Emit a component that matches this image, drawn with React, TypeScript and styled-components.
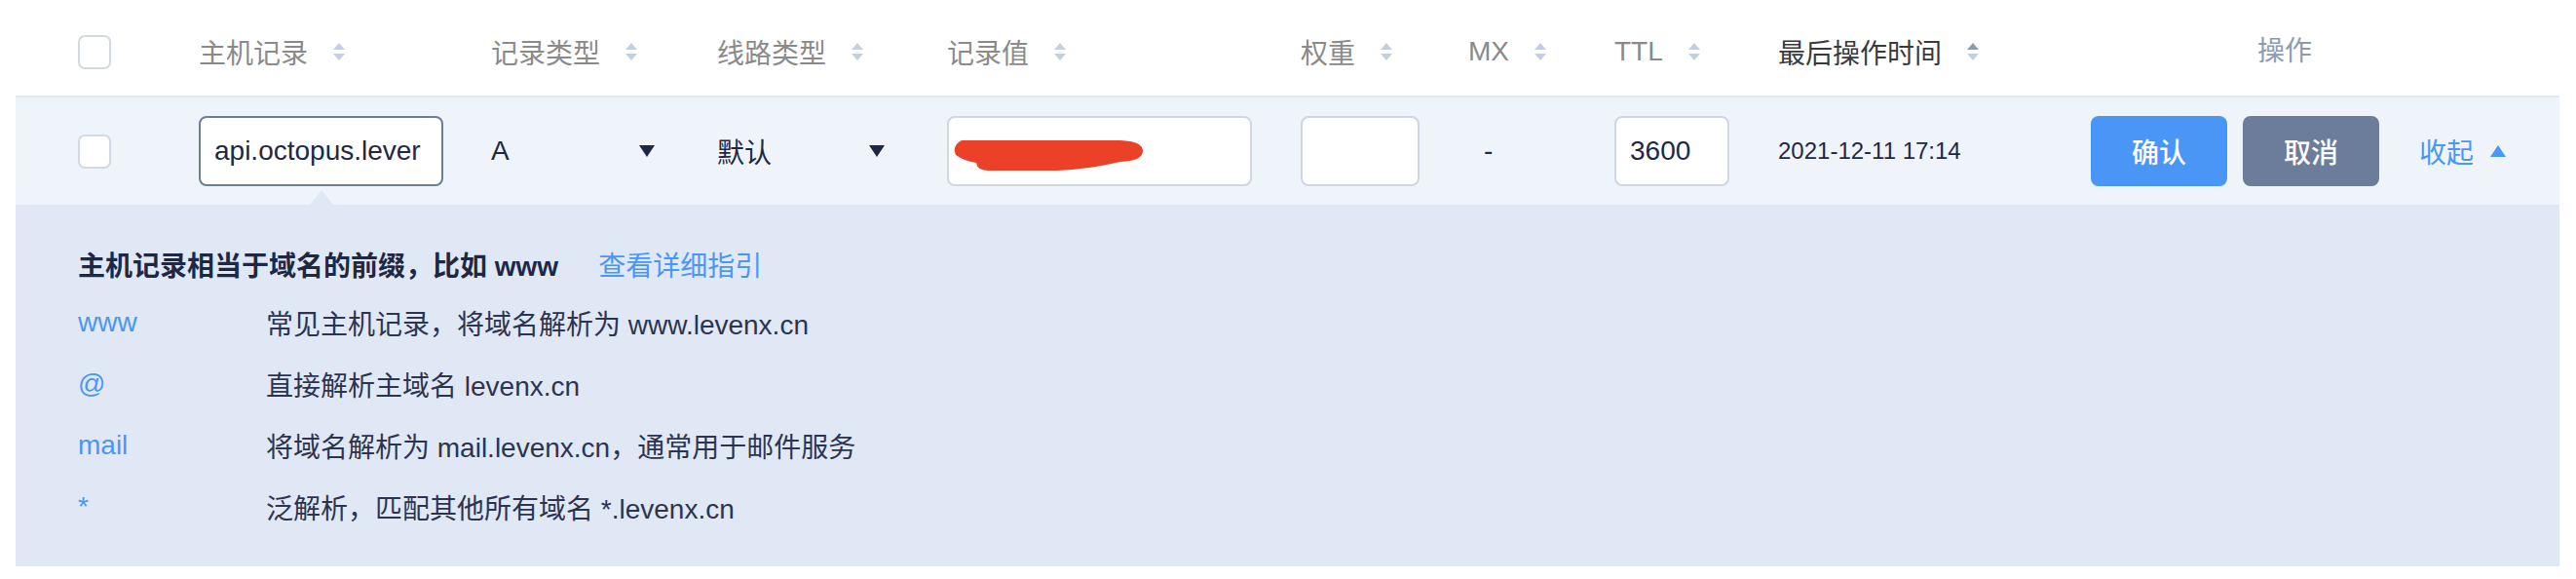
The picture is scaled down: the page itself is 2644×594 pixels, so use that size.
import React from 'react';
import styled, { createGlobalStyle } from 'styled-components';

const GlobalStyle = createGlobalStyle`
    html, body {
        margin: 0;
        padding: 0;
        background: #ffffff;
        font-family: "Liberation Sans", "Noto Sans CJK SC", sans-serif;
    }
`

const COLUMNS = '124px 300px 232px 236px 363px 172px 150px 168px 321px 1fr';

const Table = styled.div`
    margin: 0 17px 0 16px;
`

const HeadRow = styled.div`
    display: grid;
    grid-template-columns: ${COLUMNS};
    align-items: center;
    height: 100px;
    box-sizing: border-box;
    padding: 8px 0 0 64px;
    border-bottom: 2px solid #e3e7ee;
`

const HeadCell = styled.div<{ $active?: boolean }>`
    display: flex;
    align-items: center;
    gap: 26px;
    font-size: 28px;
    color: ${(p) => (p.$active ? '#3a3a3a' : '#8a8a8a')};
    white-space: nowrap;
`

const ActionHead = styled.div`
    padding-left: 171px;
    margin-bottom: 6px;
    font-size: 28px;
    color: #8c9bb4;
`

const EditRow = styled.div`
    display: grid;
    grid-template-columns: ${COLUMNS};
    align-items: center;
    height: 110px;
    box-sizing: border-box;
    padding-left: 64px;
    background: #eff3fa;
`

const Checkbox = styled.div`
    width: 34px;
    height: 35px;
    box-sizing: border-box;
    border: 2px solid #d3d9e4;
    border-radius: 7px;
    background: #ffffff;
`

const Field = styled.div<{ $width: number; $focused?: boolean }>`
    width: ${(p) => p.$width}px;
    height: 72px;
    box-sizing: border-box;
    border: 2px solid ${(p) => (p.$focused ? '#6b7d9b' : '#d0d6e2')};
    border-radius: 8px;
    background: #ffffff;
    padding: 0 14px;
    display: flex;
    align-items: center;
    overflow: hidden;
    white-space: nowrap;
    font-size: 28px;
    color: #1e2845;
`

const Select = styled.div<{ $width: number }>`
    width: ${(p) => p.$width}px;
    display: flex;
    align-items: center;
    justify-content: space-between;
    font-size: 28px;
    color: #1e2845;
`

const Plain = styled.div`
    padding-left: 16px;
    font-size: 28px;
    color: #1e2845;
`

const DateText = styled.div`
    font-size: 24px;
    color: #1e2845;
    white-space: nowrap;
`

const Actions = styled.div`
    display: flex;
    align-items: center;
    gap: 16px;
`

const Button = styled.button<{ $primary?: boolean }>`
    width: 140px;
    height: 72px;
    border: none;
    border-radius: 8px;
    background: ${(p) => (p.$primary ? '#4a96f7' : '#6b7d9b')};
    color: #ffffff;
    font-family: "Noto Sans CJK SC", sans-serif;
    font-size: 28px;
    font-weight: 500;
    cursor: pointer;
`

const Toggle = styled.div`
    margin-left: 25px;
    display: flex;
    align-items: center;
    gap: 17px;
    font-size: 28px;
    color: #4a96f7;
`

const HelpPanel = styled.div`
    position: relative;
    background: #e1e8f5;
    padding: 33px 0 30px 64px;

    &::before {
        content: '';
        position: absolute;
        top: -15px;
        left: 302px;
        border-left: 12px solid transparent;
        border-right: 12px solid transparent;
        border-bottom: 15px solid #e1e8f5;
    }
`

const HelpTitle = styled.div`
    display: flex;
    align-items: center;
    gap: 41px;
    height: 56px;
    font-size: 28px;
`

const TitleText = styled.span`
    font-weight: 700;
    color: #1e2845;
`

const Link = styled.a`
    color: #4a96f7;
    text-decoration: none;
`

const HelpRow = styled.div`
    display: flex;
    align-items: center;
    height: 63px;
    font-size: 28px;
`

const HelpKey = styled.span`
    width: 193px;
    color: #4a96f7;
`

const HelpDesc = styled.span`
    color: #2c3450;
`

const SortIcon = ({ active }: { active?: boolean }) => (
    <svg width="12" height="18" viewBox="0 0 12 18">
        <polygon points="0,7 6,0 12,7" fill={active ? '#8e9ab0' : '#c3cfe3'} />
        <polygon points="0,11 12,11 6,18" fill="#c3cfe3" />
    </svg>
)

const Caret = ({ up, color }: { up?: boolean; color: string }) => (
    <svg width="16" height="12" viewBox="0 0 16 12">
        <polygon points={up ? '0,12 8,0 16,12' : '0,0 16,0 8,12'} fill={color} />
    </svg>
)

// the value was blotted out with a red marker in the screenshot
const Redacted = () => (
    <svg width="210" height="40" viewBox="0 0 210 40" style={{ marginLeft: '-13px', marginTop: '12px' }}>
        <path
            d="M12 3 L175 3 Q198 4 198 14 Q198 24 175 25 Q140 33 110 34 L40 34 Q28 34 27 26 Q14 24 6 18 Q2 8 12 3 Z"
            fill="#ea4128"
        />
    </svg>
)

const columns = [
    { label: '主机记录' },
    { label: '记录类型' },
    { label: '线路类型' },
    { label: '记录值' },
    { label: '权重' },
    { label: 'MX' },
    { label: 'TTL' },
    { label: '最后操作时间', active: true },
];

const hints = [
    { key: 'www', desc: '常见主机记录，将域名解析为 www.levenx.cn' },
    { key: '@', desc: '直接解析主域名 levenx.cn' },
    { key: 'mail', desc: '将域名解析为 mail.levenx.cn，通常用于邮件服务' },
    { key: '*', desc: '泛解析，匹配其他所有域名 *.levenx.cn' },
];

const App = () => {
    return (
        <>
            <GlobalStyle />
            <Table>
                <HeadRow>
                    <Checkbox />
                    {columns.map((col) => (
                        <HeadCell key={col.label} $active={col.active}>
                            {col.label}
                            <SortIcon active={col.active} />
                        </HeadCell>
                    ))}
                    <ActionHead>操作</ActionHead>
                </HeadRow>

                <EditRow>
                    <Checkbox />
                    <Field $width={251} $focused>api.octopus.lever</Field>
                    <Select $width={168}>
                        A
                        <Caret color="#1e2845" />
                    </Select>
                    <Select $width={172}>
                        默认
                        <Caret color="#1e2845" />
                    </Select>
                    <Field $width={313}><Redacted /></Field>
                    <Field $width={122} />
                    <Plain>-</Plain>
                    <Field $width={118}>3600</Field>
                    <DateText>2021-12-11 17:14</DateText>
                    <Actions>
                        <Button $primary>确认</Button>
                        <Button>取消</Button>
                        <Toggle>
                            收起
                            <Caret up color="#4a96f7" />
                        </Toggle>
                    </Actions>
                </EditRow>

                <HelpPanel>
                    <HelpTitle>
                        <TitleText>主机记录相当于域名的前缀，比如 www</TitleText>
                        <Link href="#">查看详细指引</Link>
                    </HelpTitle>
                    {hints.map((hint) => (
                        <HelpRow key={hint.key}>
                            <HelpKey>{hint.key}</HelpKey>
                            <HelpDesc>{hint.desc}</HelpDesc>
                        </HelpRow>
                    ))}
                </HelpPanel>
            </Table>
        </>
    )
}

export default App;
